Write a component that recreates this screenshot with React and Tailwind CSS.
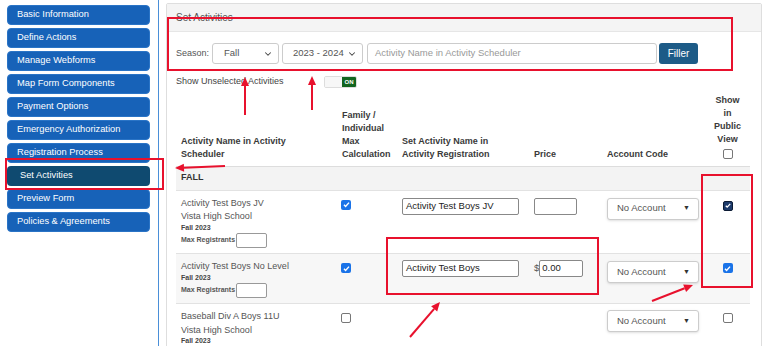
import React from "react";
import { ChevronDown } from "lucide-react";

const menu = [
  "Basic Information",
  "Define Actions",
  "Manage Webforms",
  "Map Form Components",
  "Payment Options",
  "Emergency Authorization",
  "Registration Process",
  "Set Activities",
  "Preview Form",
  "Policies & Agreements",
];

function Check({ on, dark }) {
  if (!on) {
    return <span className="block w-[10px] h-[10px] rounded-[2px] border border-[#777] bg-white" />;
  }
  return (
    <span
      className={
        dark
          ? "flex w-[10px] h-[10px] rounded-[2px] bg-[#1c3a6b] border border-[#0b1a33] items-center justify-center"
          : "flex w-[10px] h-[10px] rounded-[2px] bg-[#1a73e8] items-center justify-center"
      }
    >
      <svg viewBox="0 0 10 10" className="w-[9px] h-[9px]">
        <path d="M2.2 5.3l1.8 1.8 3.8-4.2" stroke="white" strokeWidth="1.6" fill="none" />
      </svg>
    </span>
  );
}

function AccountSelect() {
  return (
    <div className="w-[92px] h-[22px] mt-[1px] rounded-[3px] border border-[#ccc] bg-white shadow-sm flex items-center justify-between pl-[9px] pr-[8px] text-[9.5px] text-[#555]">
      <span>No Account</span>
      <span className="text-[7px] text-[#333]">▼</span>
    </div>
  );
}

function Arrow({ x1, y1, x2, y2 }) {
  const a = Math.atan2(y2 - y1, x2 - x1);
  const len = 9;
  const w = 4;
  const bx = x2 - Math.cos(a) * len;
  const by = y2 - Math.sin(a) * len;
  const px = -Math.sin(a) * w;
  const py = Math.cos(a) * w;
  return (
    <g>
      <line x1={x1} y1={y1} x2={bx} y2={by} stroke="#e8112d" strokeWidth="2" />
      <polygon points={`${x2},${y2} ${bx + px},${by + py} ${bx - px},${by - py}`} fill="#e8112d" />
    </g>
  );
}

export default function App() {
  return (
    <div className="relative w-[768px] h-[346px] overflow-hidden bg-white font-['Liberation_Sans',Arial,sans-serif]">
      <div className="flex h-full">
        {/* sidebar */}
        <div className="w-[159px] shrink-0 border-r border-[#4a8fd8] pt-[5px] pl-[7px] flex flex-col gap-[3px]">
          {menu.map((m) =>
            m === "Set Activities" ? (
              <div
                key={m}
                className="w-[143px] h-[20px] rounded-[4px] bg-[#0f4a70] text-white text-[9.3px] flex items-center pl-[13px]"
              >
                {m}
              </div>
            ) : (
              <div
                key={m}
                className="w-[143px] h-[20px] rounded-[4px] bg-[#1762b8] border border-[#2a74c6] text-white text-[9.3px] flex items-center pl-[9px]"
              >
                {m}
              </div>
            )
          )}
        </div>

        {/* main panel */}
        <div className="ml-[7px] mt-[3px] w-[596px] h-[400px] border border-[#dedede] rounded-t-[2px]">
          <div className="h-[28px] bg-[#f4f4f4] border-b border-[#e6e6e6] flex items-center pl-[9px] text-[10px] text-[#555]">
            Set Activities
          </div>

          <div className="pl-[9px]">
            {/* filter row */}
            <div className="mt-[11px] flex items-center h-[21px]">
              <span className="w-[36px] text-[9px] text-[#555]">Season:</span>
              <div className="w-[67px] h-[21px] rounded-[3px] border border-[#ccc] flex items-center justify-between pl-[11px] pr-[5px] text-[9.5px] text-[#555]">
                <span>Fall</span>
                <ChevronDown size={10} strokeWidth={2.5} color="#444" />
              </div>
              <div className="ml-[3px] w-[81px] h-[21px] rounded-[3px] border border-[#ccc] flex items-center justify-between pl-[10px] pr-[5px] text-[9.5px] text-[#555]">
                <span>2023 - 2024</span>
                <ChevronDown size={10} strokeWidth={2.5} color="#444" />
              </div>
              <div className="ml-[4px] w-[290px] h-[21px] rounded-[3px] border border-[#ccc] flex items-center pl-[7px] text-[9.5px] text-[#999]">
                Activity Name in Activity Scheduler
              </div>
              <div className="ml-[2px] w-[39px] h-[21px] rounded-[3px] bg-[#1d5b87] text-white text-[10px] flex items-center justify-center">
                Filler
              </div>
            </div>

            {/* toggle row */}
            <div className="mt-[12px] flex items-center h-[12px]">
              <span className="w-[148px] text-[9px] text-[#444]">Show Unselected Activities</span>
              <div className="flex h-[12px] w-[33px] rounded-[2px] border border-[#ddd] overflow-hidden">
                <div className="w-[17px] bg-[#f7f7f7]" />
                <div className="flex-1 bg-[#12651f] text-white text-[6px] font-bold flex items-center justify-center">
                  ON
                </div>
              </div>
            </div>

            {/* table */}
            <table className="mt-[5px] table-fixed border-collapse w-[574px] text-[9px] text-[#555]">
              <colgroup>
                <col className="w-[161px]" />
                <col className="w-[60px]" />
                <col className="w-[132px]" />
                <col className="w-[73px]" />
                <col className="w-[103px]" />
                <col className="w-[45px]" />
              </colgroup>
              <thead>
                <tr className="h-[73px] text-[#3a3a3a] font-bold leading-[13px] border-b border-[#ddd]">
                  <th className="align-bottom text-left pl-[5px] pb-[5px] font-bold">
                    Activity Name in Activity
                    <br />
                    Scheduler
                  </th>
                  <th className="align-bottom text-left pl-[5px] pb-[5px] font-bold">
                    Family /<br />
                    Individual
                    <br />
                    Max
                    <br />
                    Calculation
                  </th>
                  <th className="align-bottom text-left pl-[5px] pb-[5px] font-bold">
                    Set Activity Name in
                    <br />
                    Activity Registration
                  </th>
                  <th className="align-bottom text-left pl-[5px] pb-[5px] font-bold">Price</th>
                  <th className="align-bottom text-left pl-[5px] pb-[5px] font-bold">Account Code</th>
                  <th className="align-bottom text-center pb-[7px] font-bold">
                    Show
                    <br />
                    in
                    <br />
                    Public
                    <br />
                    View
                    <div className="flex justify-center mt-[3px]">
                      <Check />
                    </div>
                  </th>
                </tr>
              </thead>
              <tbody>
                <tr className="h-[24px] bg-[#f3f3f3]">
                  <td colSpan={6} className="pl-[5px] font-bold text-[#333]">
                    FALL
                  </td>
                </tr>

                {/* row 1 */}
                <tr className="border-t border-[#e2e2e2] align-top">
                  <td className="pl-[5px] pt-[6px] pb-[5px]">
                    <div className="leading-[13.5px]">Activity Test Boys JV</div>
                    <div className="leading-[13.5px]">Vista High School</div>
                    <div className="text-[7px] font-bold leading-[8px] text-[#444]">Fall 2023</div>
                    <div className="mt-[1.5px] flex items-center gap-[1px] text-[7px] font-bold text-[#555]">
                      <span>Max Registrants</span>
                      <span className="block w-[31px] h-[15px] border border-[#999] rounded-[2px] bg-white" />
                    </div>
                  </td>
                  <td className="pl-[4px] pt-[9px]">
                    <Check on />
                  </td>
                  <td className="pl-[5px] pt-[7px]">
                    <div className="w-[117px] h-[17px] border border-[#888] rounded-[2px] flex items-center pl-[3px] text-[9.5px] text-[#222]">
                      Activity Test Boys JV
                    </div>
                  </td>
                  <td className="pl-[5px] pt-[7px]">
                    <div className="w-[43px] h-[17px] border border-[#888] rounded-[2px]" />
                  </td>
                  <td className="pl-[5px] pt-[6px]">
                    <AccountSelect />
                  </td>
                  <td className="pt-[10px]">
                    <div className="flex justify-center">
                      <Check on dark />
                    </div>
                  </td>
                </tr>

                {/* row 2 */}
                <tr className="border-t border-[#e2e2e2] bg-[#f7f7f7] align-top">
                  <td className="pl-[5px] pt-[6px] pb-[5px]">
                    <div className="leading-[13.5px]">Activity Test Boys No Level</div>
                    <div className="text-[7px] font-bold leading-[8px] text-[#444]">Fall 2023</div>
                    <div className="mt-[1.5px] flex items-center gap-[1px] text-[7px] font-bold text-[#555]">
                      <span>Max Registrants</span>
                      <span className="block w-[31px] h-[15px] border border-[#999] rounded-[2px] bg-white" />
                    </div>
                  </td>
                  <td className="pl-[4px] pt-[9px]">
                    <Check on />
                  </td>
                  <td className="pl-[5px] pt-[6px]">
                    <div className="w-[117px] h-[17px] border border-[#888] rounded-[2px] bg-white flex items-center pl-[3px] text-[9.5px] text-[#222]">
                      Activity Test Boys
                    </div>
                  </td>
                  <td className="pl-[5px] pt-[6px]">
                    <div className="flex items-center text-[9.5px] text-[#555]">
                      <span>$</span>
                      <div className="w-[44px] h-[17px] border border-[#888] rounded-[2px] bg-white flex items-center pl-[2px] text-[#222]">
                        0.00
                      </div>
                    </div>
                  </td>
                  <td className="pl-[5px] pt-[6px]">
                    <AccountSelect />
                  </td>
                  <td className="pt-[9px]">
                    <div className="flex justify-center">
                      <Check on />
                    </div>
                  </td>
                </tr>

                {/* row 3 */}
                <tr className="border-t border-[#e2e2e2] align-top">
                  <td className="pl-[5px] pt-[6px] pb-[5px]">
                    <div className="leading-[13.5px]">Baseball Div A Boys 11U</div>
                    <div className="leading-[13.5px]">Vista High School</div>
                    <div className="text-[7px] font-bold leading-[8px] text-[#444]">Fall 2023</div>
                  </td>
                  <td className="pl-[4px] pt-[9px]">
                    <Check />
                  </td>
                  <td />
                  <td />
                  <td className="pl-[5px] pt-[5px]">
                    <AccountSelect />
                  </td>
                  <td className="pt-[9px]">
                    <div className="flex justify-center">
                      <Check />
                    </div>
                  </td>
                </tr>
              </tbody>
            </table>
          </div>
        </div>
      </div>

      {/* red annotations */}
      <svg className="absolute inset-0 w-[768px] h-[346px] pointer-events-none" viewBox="0 0 768 346">
        <g fill="none" stroke="#e8112d" strokeWidth="2">
          <rect x="6" y="159" width="157" height="30" />
          <rect x="168" y="18" width="564" height="52" />
          <rect x="387" y="238" width="211" height="56" />
          <rect x="702" y="175" width="50" height="112" />
        </g>
        <Arrow x1={245} y1={115} x2={245} y2={77} />
        <Arrow x1={312} y1={110} x2={312} y2={76} />
        <Arrow x1={225} y1={166} x2={175} y2={168} />
        <Arrow x1={410} y1={337} x2={440} y2={302} />
        <Arrow x1={652} y1={301} x2={693} y2={285} />
      </svg>
    </div>
  );
}
